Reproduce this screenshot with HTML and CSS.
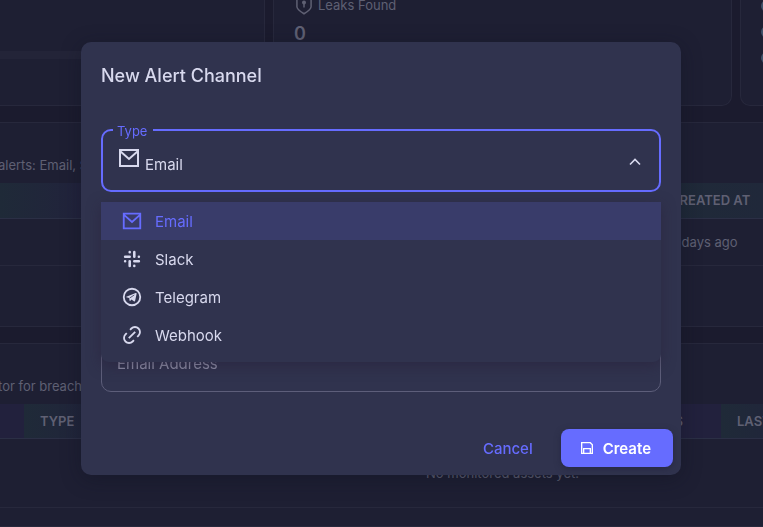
FILE: index.html
```html
<!DOCTYPE html>
<html lang="en">
<head>
    <meta charset="UTF-8">
    <meta name="viewport" content="width=device-width, initial-scale=1.0">
    <title>New Alert Channel</title>
    <link rel="stylesheet" href="styles.css">
</head>
<body>

    <main class="dashboard">
        <!-- Stat cards -->
        <section class="stats">
            <div class="stat-card stat-first">
                <div class="stat-divider"></div>
            </div>
            <div class="stat-card">
                <div class="stat-label">
                    <svg width="20" height="20" viewBox="0 0 24 24" fill="none" stroke="currentColor" stroke-width="1.8">
                        <path d="M12 2 L20.500 5 V14 Q20.500 17 12 22.500 Q3.500 17 3.500 14 V5 Z"/>
                        <circle cx="12" cy="9" r="1.500" fill="currentColor"/>
                        <path d="M12 10 V15"/>
                    </svg>
                    <span>Leaks Found</span>
                </div>
                <div class="stat-value">0</div>
            </div>
            <div class="stat-card stat-last">
                <span class="stat-dot"></span>
                <span class="stat-dot"></span>
                <span class="stat-dot"></span>
            </div>
        </section>

        <!-- Alert channels -->
        <section class="panel">
            <p class="panel-text">alerts: Email, Slack</p>
            <table class="channels">
                <thead>
                    <tr><th></th><th>Created at</th></tr>
                </thead>
                <tbody>
                    <tr><td></td><td>5 days ago</td></tr>
                </tbody>
            </table>
            <div class="panel-footer"></div>
        </section>

        <!-- Monitored assets -->
        <section class="panel">
            <p class="panel-text">tor for breaches</p>
            <table class="assets">
                <thead>
                    <tr><th></th><th>Type</th><th class="leaks">Leaks</th><th>Last</th></tr>
                </thead>
                <tbody>
                    <tr><td class="empty" colspan="4">No monitored assets yet.</td></tr>
                </tbody>
            </table>
        </section>
    </main>

    <!-- Dialog -->
    <div class="overlay">
        <form class="dialog" role="dialog" aria-labelledby="dialogTitle">
            <h2 id="dialogTitle">New Alert Channel</h2>

            <fieldset class="type-field">
                <legend>Type</legend>
                <button type="button" class="type-select" aria-haspopup="listbox" aria-expanded="true">
                    <svg class="icon-mail" width="24" height="24" viewBox="0 0 24 24" fill="none" stroke="currentColor" stroke-width="2">
                        <path d="M3 4 H21 V20 H3 Z M3 5 L12 13 L21 5"/>
                    </svg>
                    <span>Email</span>
                    <svg class="icon-arrow" width="20" height="20" viewBox="0 0 24 24" fill="none" stroke="currentColor" stroke-width="2">
                        <path d="M6 15 L12 9 L18 15"/>
                    </svg>
                </button>
                <div class="menu" role="listbox">
                    <button type="button" class="option selected" role="option" aria-selected="true">
                        <svg width="22" height="22" viewBox="0 0 24 24" fill="none" stroke="currentColor" stroke-width="2">
                            <path d="M3 4 H21 V20 H3 Z M3 5 L12 13 L21 5"/>
                        </svg>
                        Email
                    </button>
                    <button type="button" class="option" role="option">
                        <svg width="22" height="22" viewBox="0 0 24 24" fill="none" stroke="currentColor" stroke-width="2.8" stroke-linecap="round">
                            <path d="M9.500 4.500 V4.500 M4.500 9.500 H9.500 M14.500 4.500 V9.500 M19.500 9.500 V9.500 M14.500 14.500 H19.500 M14.500 19.500 V19.500 M9.500 14.500 V19.500 M4.500 14.500 V14.500"/>
                        </svg>
                        Slack
                    </button>
                    <button type="button" class="option" role="option">
                        <svg width="22" height="22" viewBox="0 0 24 24">
                            <circle cx="12" cy="12" r="9" fill="none" stroke="currentColor" stroke-width="2"/>
                            <path fill="currentColor" d="M5.800 11.700 L16 7.600 Q17.300 7.200 17 8.700 L15.400 16.200 Q15.100 17.400 14 16.700 L11.500 14.800 L10.200 16.100 Q9.600 16.700 9.400 15.700 L8.800 13.200 L5.900 12.300 Q5.200 12 5.800 11.700 Z"/>
                            <path fill="none" stroke="#30334e" stroke-width="0.8" d="M9.300 13.200 L14.500 9.800"/>
                        </svg>
                        Telegram
                    </button>
                    <button type="button" class="option" role="option">
                        <svg width="22" height="22" viewBox="0 0 24 24" fill="none" stroke="currentColor" stroke-width="2">
                            <path d="M9.900 6.300 L11.300 4.900 A5.500 5.500 0 0 1 19.100 12.700 L17.700 14.100 M14.100 17.700 L12.700 19.100 A5.500 5.500 0 0 1 4.900 11.300 L6.300 9.900 M8.500 15.500 L15.500 8.500"/>
                        </svg>
                        Webhook
                    </button>
                </div>
            </fieldset>

            <input class="address" type="email" placeholder="Email Address" aria-label="Email Address">

            <div class="actions">
                <button type="button" class="btn btn-cancel">Cancel</button>
                <button type="submit" class="btn btn-create">
                    <svg width="16" height="16" viewBox="0 0 24 24" fill="none" stroke="currentColor" stroke-width="2">
                        <path d="M4 4 H17 L20 7 V20 H4 Z M7 20 V13 H17 V20"/>
                    </svg>
                    Create
                </button>
            </div>
        </form>
    </div>

</body>
</html>
```

FILE: styles.css
```css
/* Basic Reset */
* {
    margin: 0;
    padding: 0;
    box-sizing: border-box;
}

body {
    font-family: Inter, sans-serif;
    font-size: 13px;
    background-color: #1b1b2e;
    color: #5f6073;
    height: 100vh;
    overflow: hidden;
}

button,
input {
    font: inherit;
    color: inherit;
}

.dashboard {
    display: flex;
    flex-direction: column;
    gap: 16px;
    height: 100vh;
    overflow: hidden;
}

/* Stat cards */
.stats {
    display: grid;
    flex-shrink: 0;
    grid-template-columns: 265px 1fr 23px;
    gap: 8px;
    height: 106px;
}

.stat-card {
    background: #1e1f33;
    border: 1px solid #27283c;
    border-top: none;
    border-radius: 0 0 10px 10px;
    padding-left: 20px;
}

.stat-first {
    border-left: none;
    border-bottom-left-radius: 0;
    padding: 51px 0 0;
}

.stat-last {
    display: flex;
    flex-direction: column;
    gap: 14px;
    border-right: none;
    border-bottom-right-radius: 0;
    overflow: hidden;
}

.stat-divider {
    height: 8px;
    background: #232438;
}

.stat-label {
    display: flex;
    align-items: center;
    gap: 4px;
    height: 10px;
}

.stat-value {
    font-size: 18px;
    font-weight: 600;
    line-height: 24px;
    margin-top: 12px;
}

.stat-dot {
    flex-shrink: 0;
    width: 12px;
    height: 12px;
    border-radius: 50%;
    background: #40526a;
}

/* Panels */
.panel {
    flex-shrink: 0;
    background: #1e1f33;
    border: 1px solid #27283c;
    border-width: 1px 0;
}

.panel:last-child {
    flex: 1;
}

.panel-text {
    line-height: 20px;
    padding: 32px 0 8px;
    text-indent: -2px;
}

.panel-footer {
    height: 60px;
}

table {
    width: 100%;
    border-collapse: collapse;
    table-layout: fixed;
}

th {
    height: 35px;
    padding: 0 16px;
    text-align: left;
    text-transform: uppercase;
    font-weight: 600;
    border-bottom: 1px solid #2b2f45;
    background: linear-gradient(90deg, #1f2a38, #22213d 100px);
}

td {
    height: 47px;
    padding: 0 16px;
    border-bottom: 1px solid #27283c;
}

.channels th:last-child,
.channels td:last-child {
    width: 109px;
    padding-right: 0;
}

.channels th:last-child {
    background: linear-gradient(90deg, #1f2a38, #20283a);
}

.assets th:first-child {
    width: 24px;
    padding: 0;
    background: #22213d;
}

.assets th:last-child {
    width: 42px;
    padding-right: 0;
}

.assets .leaks {
    text-align: right;
    padding-right: 38px;
}

.assets .empty {
    height: 69px;
    text-align: center;
    padding-left: 258px;
}

/* Dialog */
.overlay {
    position: fixed;
    inset: 0;
    display: flex;
    align-items: flex-start;
    justify-content: center;
    padding: 42px 1px 0 0;
}

.dialog {
    width: 600px;
    max-width: 100%;
    padding: 20px 20px 8px;
    border-radius: 10px;
    background: #30334e;
    color: #d8d9ee;
    font-size: 15px;
    box-shadow: 0 4px 20px rgba(16, 17, 33, 0.4);
}

.dialog h2 {
    font-size: 18px;
    font-weight: 500;
    line-height: 28px;
    padding-bottom: 32px;
}

.type-field {
    position: relative;
    border: 2px solid #666cff;
    border-radius: 10px;
    padding: 0 14px;
}

.type-field legend {
    color: #666cff;
    font-size: 13px;
    line-height: 14px;
    padding: 2px 6px 0 4px;
    margin-left: -4px;
}

.type-select {
    display: flex;
    align-items: center;
    gap: 4px;
    width: 100%;
    height: 52px;
    padding-top: 1px;
    border: none;
    background: none;
}

.icon-mail {
    margin-bottom: 14px;
}

.icon-arrow {
    margin-left: auto;
    margin-bottom: 6px;
}

.menu {
    position: absolute;
    top: 100%;
    left: -2px;
    right: -2px;
    margin-top: 12px;
    padding-bottom: 8px;
    border-radius: 0 0 8px 8px;
    background: #30334e;
    box-shadow: 0 4px 14px rgba(40, 30, 55, 0.5);
}

.option {
    display: flex;
    align-items: center;
    gap: 12px;
    width: 100%;
    height: 38px;
    padding: 0 20px;
    border: none;
    background: none;
}

.option.selected {
    color: #666cff;
    background: #393c6a;
}

.address {
    display: block;
    width: 100%;
    height: 56px;
    margin-top: 144px;
    padding: 0 15px 2px;
    border: 1px solid #5d5e7a;
    border-radius: 10px;
    background: none;
}

.address::placeholder {
    color: #9192aa;
    opacity: 1;
}

.actions {
    display: flex;
    justify-content: flex-end;
    gap: 8px;
    margin: 37px -12px 0 0;
}

.btn {
    display: flex;
    align-items: center;
    gap: 8px;
    height: 38px;
    padding: 0 20px;
    border: none;
    border-radius: 8px;
    font-weight: 500;
}

.btn-cancel {
    background: none;
    color: #666cff;
}

.btn-create {
    background: #666cff;
    color: #fff;
    font-weight: 600;
    padding: 0 22px 0 18px;
    box-shadow: 0 2px 6px rgba(30, 30, 55, 0.5);
}
```
